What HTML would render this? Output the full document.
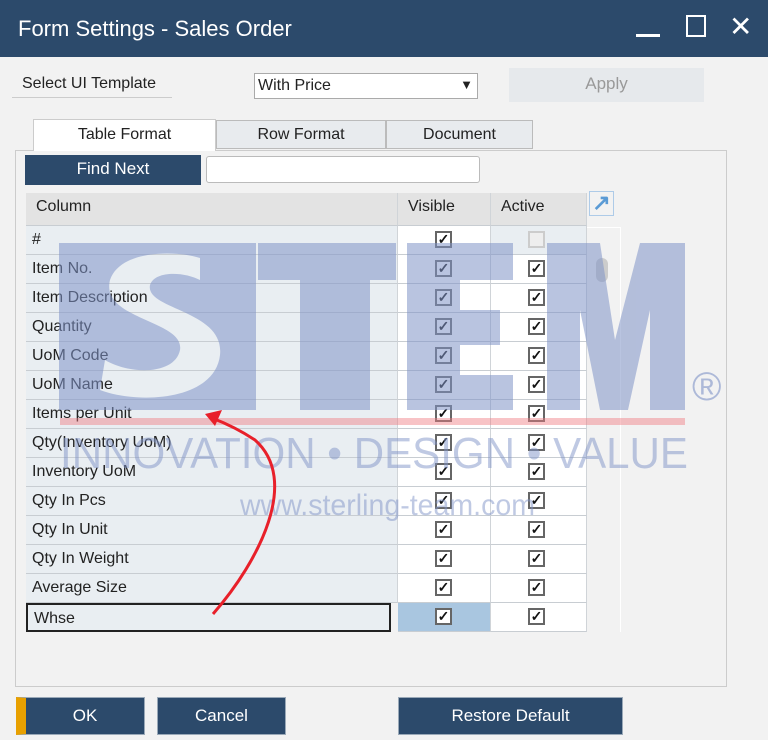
<!DOCTYPE html>
<html><head><meta charset="utf-8"><style>
*{box-sizing:border-box;margin:0;padding:0}
body{width:768px;height:740px;background:#f2f2f2;font-family:"Liberation Sans",sans-serif;position:relative;overflow:hidden;font-size:16px;color:#222}
.a{position:absolute}
.title{left:0;top:0;width:768px;height:57px;background:#2c4a6b;color:#fff;font-size:22px}
.btn{background:#2c4a6b;color:#fff;text-align:center;font-size:17px;line-height:36px;border:1px solid #9aa9b8}
.cell{position:absolute;border-right:1px solid #d0d4d8;border-bottom:1px solid #c8cdd2}
.cb{position:absolute;width:17px;height:17px;border:2px solid #666;background:#fff;font-size:14px;line-height:13px;text-align:center;font-weight:bold;color:#111}
</style></head><body>
<div class="a title"><div class="a" style="left:18px;top:16px">Form Settings - Sales Order</div>
<div class="a" style="left:636px;top:34px;width:24px;height:3px;background:#fff"></div>
<div class="a" style="left:686px;top:15px;width:20px;height:22px;border:2.5px solid #fff"></div>
<div class="a" style="left:729px;top:10px;font-size:28px">✕</div></div>
<div class="a" style="left:22px;top:75px">Select UI Template</div>
<div class="a" style="left:12px;top:97px;width:160px;height:1px;background:#ccc"></div>
<div class="a" style="left:254px;top:73px;width:224px;height:26px;background:#fff;border:1px solid #aaa;padding:3px 3px;font-size:16px">With Price<span class="a" style="right:4px;top:3px;font-size:13px">▼</span></div>
<div class="a" style="left:509px;top:68px;width:195px;height:34px;background:#e6e9ec;color:#999;text-align:center;line-height:32px;font-size:17px">Apply</div>
<div class="a" style="left:15px;top:150px;width:712px;height:537px;border:1px solid #ccc"></div>
<div class="a" style="left:33px;top:119px;width:183px;height:32px;background:#fff;border:1px solid #ccc;border-bottom:none;text-align:center;line-height:30px">Table Format</div>
<div class="a" style="left:216px;top:120px;width:170px;height:29px;background:#e8ebee;border:1px solid #bbb;text-align:center;line-height:28px">Row Format</div>
<div class="a" style="left:386px;top:120px;width:147px;height:29px;background:#e8ebee;border:1px solid #bbb;text-align:center;line-height:28px">Document</div>
<div class="a btn" style="left:25px;top:155px;width:176px;height:30px;line-height:27px;border:none">Find Next</div>
<div class="a" style="left:206px;top:156px;width:274px;height:27px;background:#fff;border:1px solid #bbb;border-radius:3px"></div>
<div class="a" style="left:589px;top:191px;width:25px;height:25px;border:1px solid #aecbe8;color:#5b9bd5;font-size:22px;line-height:22px;text-align:center;font-weight:bold">↗</div>
<div class="a" style="left:587px;top:227px;width:34px;height:405px;border-top:1px solid #fff;border-right:1px solid #fff"></div>
<div class="a" style="left:596px;top:258px;width:12px;height:24px;background:#ccc;border-radius:6px"></div>
<div id="tbl"></div>
<svg class="a" style="left:0;top:0" width="768" height="740">
<g fill="#8094c8" opacity="0.55">
<path d="M59 243H256V410H59Z M200 258C175 250 120 250 110 280C100 320 185 320 180 350C175 375 130 375 105 360L100 390C140 405 215 400 220 355C225 310 145 310 150 285C155 270 185 272 200 280Z" fill-rule="evenodd"/>
<path d="M258 243H396V280H370V410H300V280H258Z"/>
<path d="M407 243H513V280H460V310H500V345H460V375H513V410H407Z"/>
<path d="M547 243H600L615 340L640 243H685V410H650V310L628 410H600L580 310V410H547Z"/>
</g>
<text x="692" y="400" font-size="40" fill="#8094c8" opacity="0.6" font-family="Liberation Sans">®</text>
<rect x="60" y="418" width="625" height="7" fill="#f07a80" opacity="0.45"/>
<text x="60" y="468" font-size="44" fill="#8094c8" opacity="0.5" font-family="Liberation Sans" textLength="628" lengthAdjust="spacingAndGlyphs">INNOVATION • DESIGN • VALUE</text>
<text x="240" y="515" font-size="30" fill="#8094c8" opacity="0.5" font-family="Liberation Sans" textLength="295" lengthAdjust="spacingAndGlyphs">www.sterling-team.com</text>
<path d="M213 614C260 560 300 480 255 440C240 430 225 423 212 418" stroke="#e8202a" stroke-width="3" fill="none"/>
<path d="M205 414L222 410L215 426Z" fill="#e8202a"/>
</svg>
<div class="a btn" style="left:16px;top:697px;width:129px;height:38px;border-left:10px solid #e8a000">OK</div>
<div class="a btn" style="left:157px;top:697px;width:129px;height:38px">Cancel</div>
<div class="a btn" style="left:398px;top:697px;width:225px;height:38px">Restore Default</div>
<script>
var rows=["#","Item No.","Item Description","Quantity","UoM Code","UoM Name","Items per Unit","Qty(Inventory UoM)","Inventory UoM","Qty In Pcs","Qty In Unit","Qty In Weight","Average Size","Whse"];
var h='<div class="cell" style="left:26px;top:193px;width:372px;height:33px;background:#e3e3e3;padding:5px 10px">Column</div>'+
'<div class="cell" style="left:398px;top:193px;width:93px;height:33px;background:#e3e3e3;padding:5px 10px">Visible</div>'+
'<div class="cell" style="left:491px;top:193px;width:96px;height:33px;background:#e3e3e3;padding:5px 10px">Active</div>';
rows.forEach(function(r,i){var y=226+i*29;var last=i==13;
h+='<div class="cell" style="left:26px;top:'+y+'px;width:372px;height:29px;background:#e9eef2;padding:5px 6px;'+(last?'border:2px solid #222;width:365px':'')+'">'+r+'</div>';
h+='<div class="cell" style="left:398px;top:'+y+'px;width:93px;height:29px;background:'+(last?'#a9c6e0':'#fff')+'"><div class="cb" style="left:37px;top:5px">✓</div></div>';
h+='<div class="cell" style="left:491px;top:'+y+'px;width:96px;height:29px;background:'+(i==0?'#e9eef2':'#fff')+'"><div class="cb" style="left:37px;top:5px;'+(i==0?'border-color:#ccc;background:#eee':'')+'">'+(i==0?'':'✓')+'</div></div>';});
document.getElementById('tbl').innerHTML=h;
</script>
</body></html>
